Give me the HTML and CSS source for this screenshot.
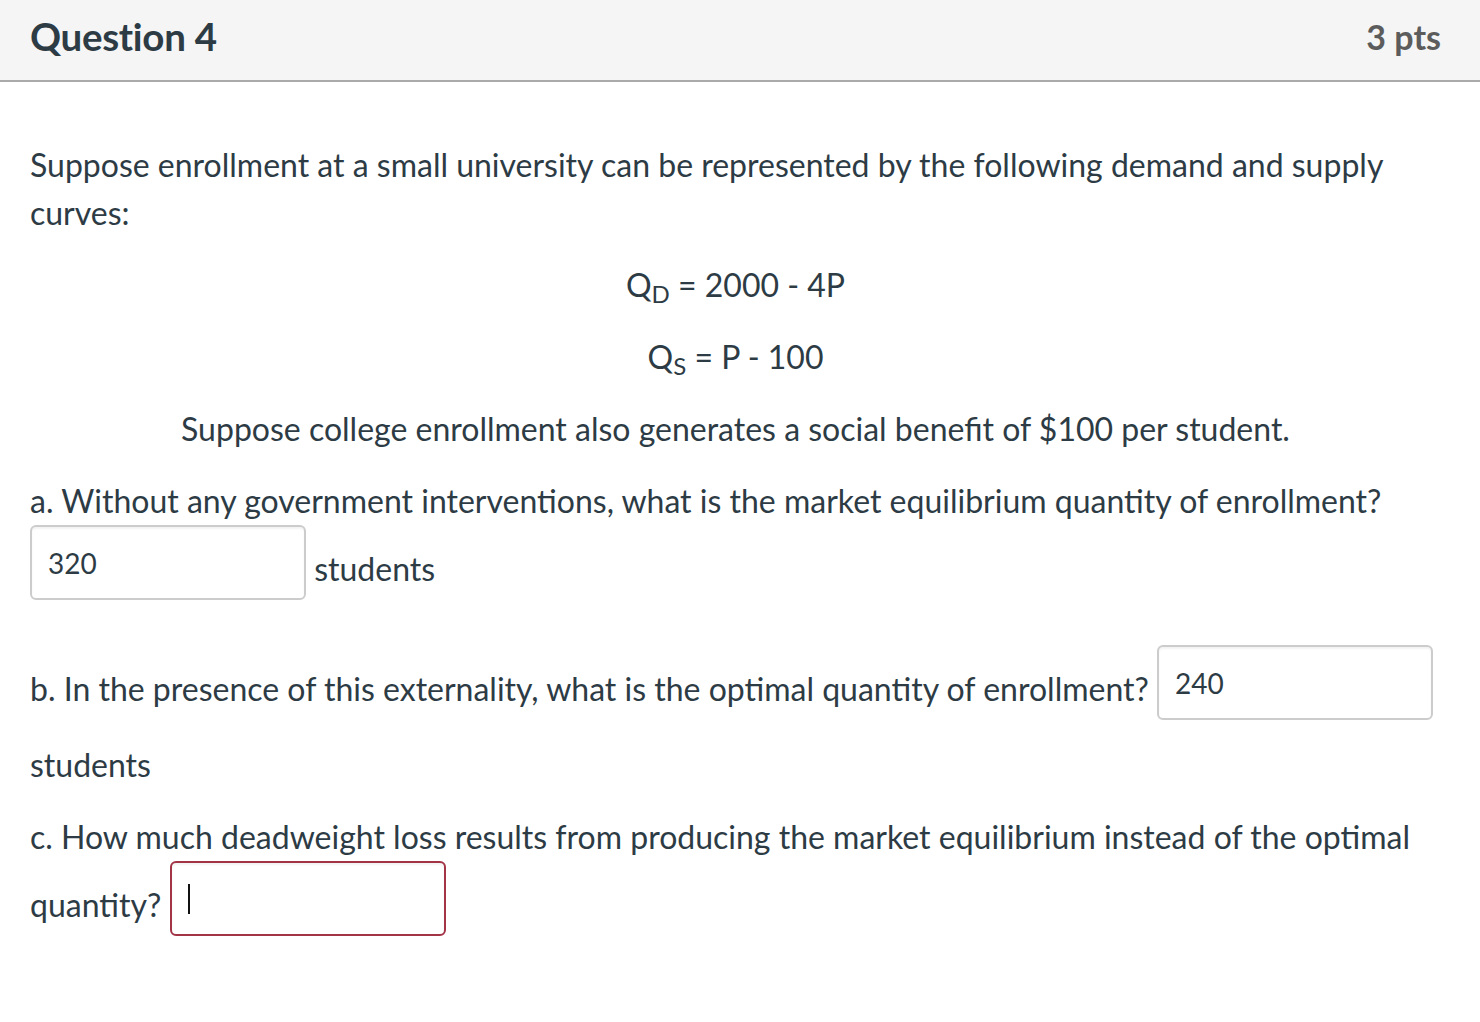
FILE: index.html
```html
<!DOCTYPE html>
<html lang="en">
<head>
<meta charset="utf-8">
<title>Question 4</title>
<link rel="stylesheet" href="styles.css">
</head>
<body>
<div class="question">
  <div class="q-header">
    <h2 class="q-title">Question 4</h2>
    <div class="q-points">3 pts</div>
  </div>
  <div class="q-body">
    <p>Suppose enrollment at a small university can be represented by the following demand and supply curves:</p>
    <p class="center">Q<sub>D</sub> = 2000 - 4P</p>
    <p class="center">Q<sub>S</sub> = P - 100</p>
    <p class="center">Suppose college enrollment also generates a social benefit of $100 per student.</p>
    <p>a. Without any government interventions, what is the market equilibrium quantity of enrollment? <input class="answer" type="text" value="320" readonly> students</p>
    <p>b. In the presence of this externality, what is the optimal quantity of enrollment? <input class="answer" type="text" value="240" readonly> students</p>
    <p>c. How much deadweight loss results from producing the market equilibrium instead of the optimal quantity? <span class="answer answer-focus"><span class="caret"></span></span></p>
  </div>
</div>
</body>
</html>
```

FILE: styles.css
```css
html, body {
  margin: 0;
  padding: 0;
  background: #ffffff;
}

body {
  font-family: Lato, "Open Sans", "Liberation Sans", sans-serif;
  color: #2d3b45;
}

.q-header {
  display: flex;
  justify-content: space-between;
  align-items: center;
  height: 82px;
  box-sizing: border-box;
  padding: 0 39px 8px 30px;
  background: #f5f5f5;
  border-bottom: 2px solid #aaaaaa;
}

.q-title {
  margin: 0;
  font-size: 38.5px;
  font-weight: 700;
  color: #2d3b45;
  letter-spacing: -0.3px;
}

.q-points {
  font-size: 34px;
  font-weight: 700;
  color: #5c5c5c;
}

.q-body {
  padding: 35px 39px 40px 30px;
  font-size: 32px;
  line-height: 48px;
}

.q-body p {
  margin: 24px 0;
}

.center {
  text-align: center;
}

sub {
  font-size: 24px;
  line-height: 0;
  vertical-align: -6px;
}

.answer {
  display: inline-block;
  box-sizing: border-box;
  width: 276px;
  height: 75px;
  margin: 0 0 21px 0;
  padding: 0 16px;
  border: 2px solid #cccccc;
  border-radius: 6px;
  background: #ffffff;
  box-shadow: inset 0 2px 2px rgba(0, 0, 0, 0.05);
  font-family: Lato, "Open Sans", "Liberation Sans", sans-serif;
  font-size: 28px;
  color: #2d3b45;
  vertical-align: middle;
  outline: none;
}

.answer-focus {
  position: relative;
  border-color: #a33446;
}

.caret {
  position: absolute;
  left: 16px;
  top: 21px;
  width: 2px;
  height: 30px;
  background: #111111;
}
```
